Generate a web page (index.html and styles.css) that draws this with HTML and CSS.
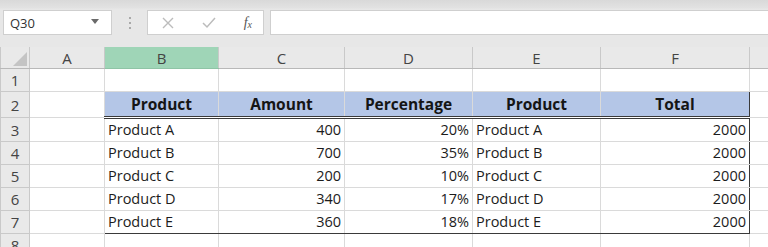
FILE: index.html
```html
<!DOCTYPE html>
<html>
<head>
    <meta charset="UTF-8">
    <title>Sheet1</title>
    <link rel="stylesheet" href="styles.css">
</head>
<body>
    <div class="toolbar">
        <div class="name-box">
            <span>Q30</span>
            <svg class="caret" width="8" height="5" viewBox="0 0 8 5"><path d="M0 0h8L4 5z" fill="#6a6a6a"/></svg>
        </div>
        <div class="grip">
            <i></i><i></i><i></i>
        </div>
        <div class="fx-buttons">
            <svg width="12" height="12" viewBox="0 0 12 12"><path d="M1 1l10 10M11 1L1 11" stroke="#bcbcbc" stroke-width="1.4" fill="none"/></svg>
            <svg width="14" height="12" viewBox="0 0 14 12"><path d="M1 6l4 4 8-9" stroke="#bcbcbc" stroke-width="1.5" fill="none"/></svg>
            <span class="fx">f<sub>x</sub></span>
        </div>
        <div class="formula"></div>
    </div>

    <table class="sheet">
        <colgroup>
            <col class="c-hd"><col class="c-a"><col class="c-b"><col class="c-c">
            <col class="c-d"><col class="c-e"><col class="c-f"><col>
        </colgroup>
        <tr class="col-heads">
            <th class="corner"><svg width="14" height="14" viewBox="0 0 14 14"><path d="M14 0v14H0z" fill="#c4c4c4"/></svg></th>
            <th>A</th><th class="active">B</th><th>C</th><th>D</th><th>E</th><th>F</th><th></th>
        </tr>
        <tr class="r1">
            <th>1</th><td></td><td></td><td></td><td></td><td></td><td></td><td></td>
        </tr>
        <tr class="r2">
            <th>2</th><td></td>
            <td class="hd first">Product</td>
            <td class="hd">Amount</td>
            <td class="hd">Percentage</td>
            <td class="hd">Product</td>
            <td class="hd last">Total</td>
            <td></td>
        </tr>
        <tr>
            <th>3</th><td></td>
            <td class="first">Product A</td><td class="num">400</td><td class="num">20%</td>
            <td>Product A</td><td class="num last">2000</td><td></td>
        </tr>
        <tr>
            <th>4</th><td></td>
            <td class="first">Product B</td><td class="num">700</td><td class="num">35%</td>
            <td>Product B</td><td class="num last">2000</td><td></td>
        </tr>
        <tr>
            <th>5</th><td></td>
            <td class="first">Product C</td><td class="num">200</td><td class="num">10%</td>
            <td>Product C</td><td class="num last">2000</td><td></td>
        </tr>
        <tr>
            <th>6</th><td></td>
            <td class="first">Product D</td><td class="num">340</td><td class="num">17%</td>
            <td>Product D</td><td class="num last">2000</td><td></td>
        </tr>
        <tr class="bottom">
            <th>7</th><td></td>
            <td class="first">Product E</td><td class="num">360</td><td class="num">18%</td>
            <td>Product E</td><td class="num last">2000</td><td></td>
        </tr>
        <tr>
            <th>8</th><td></td><td></td><td></td><td></td><td></td><td></td><td></td>
        </tr>
    </table>
</body>
</html>
```

FILE: styles.css
```css
body {
    margin: 0;
    background: #fff;
    font-family: "Open Sans", "Liberation Sans", sans-serif;
    overflow: hidden;
}

/* formula bar strip */
.toolbar {
    height: 47px;
    box-sizing: border-box;
    padding: 10px 0 12px 3px;
    display: flex;
    background: linear-gradient(#d9d9d9 0, #e2e2e2 8px, #e7e7e7 9px);
}
.name-box {
    width: 109px;
    box-sizing: border-box;
    background: #fff;
    border: 1px solid #cfcfcf;
    display: flex;
    align-items: center;
    justify-content: space-between;
    padding: 0 12px 0 6px;
    font-size: 13px;
    color: #333;
}
.caret {
    margin-top: -3px;
}
.grip {
    width: 35px;
    display: flex;
    flex-direction: column;
    align-items: center;
    justify-content: center;
    gap: 3px;
}
.grip i {
    width: 2px;
    height: 2px;
    background: #a9a9a9;
}
.fx-buttons {
    width: 117px;
    box-sizing: border-box;
    background: #fff;
    border: 1px solid #cfcfcf;
    display: flex;
    align-items: center;
    justify-content: space-between;
    padding: 0 11px 0 14px;
}
.fx {
    font-family: "Liberation Serif", serif;
    font-style: italic;
    font-size: 14px;
    color: #555;
}
.fx sub {
    font-size: 10px;
    vertical-align: -1px;
}
.formula {
    flex: 1;
    margin-left: 6px;
    background: #fff;
    border: 1px solid #cfcfcf;
    border-right: none;
}

/* grid */
.sheet {
    border-collapse: collapse;
    table-layout: fixed;
    width: 780px;
    font-size: 14.5px;
    color: #1c1c1c;
}
.c-hd { width: 29px; }
.c-a { width: 75px; }
.c-b { width: 114px; }
.c-c { width: 126px; }
.c-d { width: 128px; }
.c-e { width: 128px; }
.c-f { width: 149px; }

.sheet td,
.sheet th {
    border: 1px solid #dadada;
    padding: 0 3px;
    height: 22px;
    line-height: 20px;
    white-space: nowrap;
    overflow: hidden;
}
.sheet th {
    background: #e9e9e9;
    color: #444;
    font-weight: normal;
    font-size: 15px;
    text-align: center;
    padding: 0;
    border-color: #c9c9c9;
}
.col-heads th {
    height: 21px;
    border-top: none;
    border-bottom: 1px solid #b8b8b8;
}
.col-heads th.active {
    background: #9fd5b7;
    border-bottom: 1px solid #8fc4a6;
}
.corner {
    text-align: right !important;
    vertical-align: bottom;
}
.corner svg {
    display: block;
    margin: 0 2px 2px auto;
}

.r1 td, .r1 th { height: 22px; }
.r2 td, .r2 th { height: 24px; }

.hd {
    background: #b4c6e7;
    font-weight: bold;
    font-size: 15.5px;
    text-align: center;
    color: #151515;
    border-top: 1px solid #3a3a3a !important;
    border-bottom: 3px double #3a3a3a !important;
}
.first { border-left: 1px solid #3a3a3a !important; }
.last { border-right: 1px solid #3a3a3a !important; }
.bottom td.first,
.bottom td.first ~ td:not(:last-child) {
    border-bottom: 1px solid #3a3a3a;
}
.num { text-align: right; }
```
